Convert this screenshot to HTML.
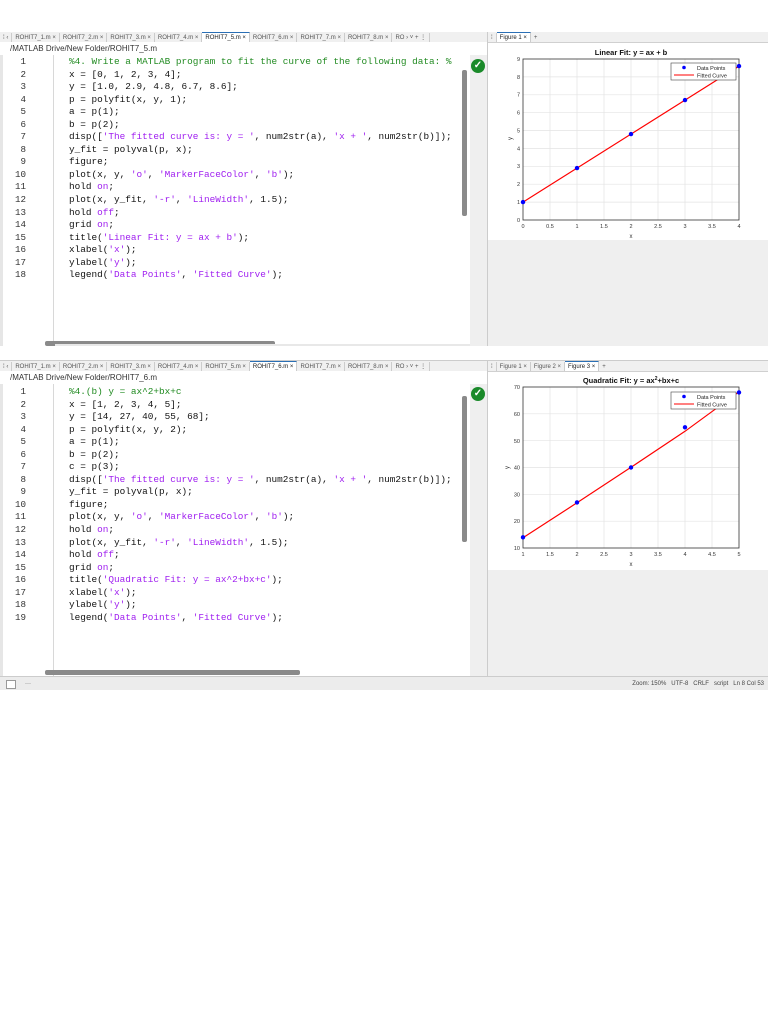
<!DOCTYPE html>
<html><head><meta charset="utf-8">
<style>
*{margin:0;padding:0;box-sizing:border-box}
body{width:768px;height:1024px;background:#fff;position:relative;overflow:hidden;font-family:"Liberation Sans",sans-serif}
.abs{position:absolute}
.tabs{height:11px;background:#f0f0f0;border-bottom:1px solid #d0d0d0;font-size:6px;color:#555;white-space:nowrap;overflow:hidden}
.tabs span{display:inline-block;height:10px;line-height:10px;padding:0 3px;border-right:1px solid #ccc}
.tabs span.on{background:#fff;border-top:1px solid #2a6fb5;color:#222}
.path{font-size:8px;color:#333;height:13px;line-height:13px;padding-left:10px;background:#fff;width:487px}
.code{font-family:"Liberation Mono",monospace;font-size:9.4px;line-height:12.55px;white-space:pre;color:#111}
.ln{font-family:"Liberation Mono",monospace;font-size:9.2px;line-height:12.55px;color:#333;text-align:right;width:26px;white-space:pre}
.g{color:#228b22}.m{color:#a020f0}
.gut{background:#fff;border-right:1px solid #d8d8d8}
.side{background:#efefef}
.chk{width:14px;height:14px;border-radius:50%;background:#1a8a2a;color:#fff;font-size:10px;line-height:14px;text-align:center;font-weight:bold}
.vs{background:#8a8a8a;width:5px;border-radius:2px}
.hs{background:#8a8a8a;height:5px;border-radius:2px}
</style></head><body>

<!-- Panel 1 -->
<div class="abs tabs" style="left:0;top:32px;width:487px"><span>⁞ ‹</span><span>ROHIT7_1.m ×</span><span>ROHIT7_2.m ×</span><span>ROHIT7_3.m ×</span><span>ROHIT7_4.m ×</span><span class="on">ROHIT7_5.m ×</span><span>ROHIT7_6.m ×</span><span>ROHIT7_7.m ×</span><span>ROHIT7_8.m ×</span><span>RO › ˅ + ⋮</span></div>
<div class="abs path" style="left:0;top:42px">/MATLAB Drive/New Folder/ROHIT7_5.m</div>
<div class="abs gut" style="left:0;top:55px;width:54px;height:291px;border-left:3px solid #e6e6e6"></div>
<div class="abs side" style="left:470px;top:55px;width:17px;height:291px"></div>
<div class="abs" style="left:487px;top:32px;width:1px;height:314px;background:#ccc"></div>
<div class="abs ln" style="left:0;top:56px">1
2
3
4
5
6
7
8
9
10
11
12
13
14
15
16
17
18</div>
<div class="abs code" style="left:69px;top:56px;width:390px;overflow:hidden"><span class="g">%4. Write a MATLAB program to fit the curve of the following data: % </span>
x = [0, 1, 2, 3, 4];
y = [1.0, 2.9, 4.8, 6.7, 8.6];
p = polyfit(x, y, 1);
a = p(1);
b = p(2);
disp([<span class="m">'The fitted curve is: y = '</span>, num2str(a), <span class="m">'x + '</span>, num2str(b)]);
y_fit = polyval(p, x);
figure;
plot(x, y, <span class="m">'o'</span>, <span class="m">'MarkerFaceColor'</span>, <span class="m">'b'</span>);
hold <span class="m">on</span>;
plot(x, y_fit, <span class="m">'-r'</span>, <span class="m">'LineWidth'</span>, 1.5);
hold <span class="m">off</span>;
grid <span class="m">on</span>;
title(<span class="m">'Linear Fit: y = ax + b'</span>);
xlabel(<span class="m">'x'</span>);
ylabel(<span class="m">'y'</span>);
legend(<span class="m">'Data Points'</span>, <span class="m">'Fitted Curve'</span>);</div>
<div class="abs vs" style="left:462px;top:70px;height:146px"></div>
<div class="abs chk" style="left:471px;top:59px">✓</div>
<div class="abs hs" style="left:45px;top:341px;width:230px"></div>
<div class="abs" style="left:55px;top:344px;width:415px;height:2px;background:#e8e8e8"></div>

<!-- Figure 1 panel -->
<div class="abs tabs" style="left:488px;top:32px;width:280px;background:#f0f0f0"><span>⁞</span><span class="on">Figure 1 ×</span><span style="border:none">+</span></div>
<div class="abs side" style="left:488px;top:240px;width:280px;height:106px"></div>

<!-- Panel 2 -->
<div class="abs" style="left:0;top:360px;width:768px;height:1px;background:#ccc"></div>
<div class="abs tabs" style="left:0;top:361px;width:487px"><span>⁞ ‹</span><span>ROHIT7_1.m ×</span><span>ROHIT7_2.m ×</span><span>ROHIT7_3.m ×</span><span>ROHIT7_4.m ×</span><span>ROHIT7_5.m ×</span><span class="on">ROHIT7_6.m ×</span><span>ROHIT7_7.m ×</span><span>ROHIT7_8.m ×</span><span>RO › ˅ + ⋮</span></div>
<div class="abs path" style="left:0;top:371px">/MATLAB Drive/New Folder/ROHIT7_6.m</div>
<div class="abs gut" style="left:0;top:384px;width:54px;height:292px;border-left:3px solid #e6e6e6"></div>
<div class="abs side" style="left:470px;top:384px;width:17px;height:292px"></div>
<div class="abs" style="left:487px;top:361px;width:1px;height:315px;background:#ccc"></div>
<div class="abs ln" style="left:0;top:386px">1
2
3
4
5
6
7
8
9
10
11
12
13
14
15
16
17
18
19</div>
<div class="abs code" style="left:69px;top:386px;width:390px;overflow:hidden"><span class="g">%4.(b) y = ax^2+bx+c</span>
x = [1, 2, 3, 4, 5];
y = [14, 27, 40, 55, 68];
p = polyfit(x, y, 2);
a = p(1);
b = p(2);
c = p(3);
disp([<span class="m">'The fitted curve is: y = '</span>, num2str(a), <span class="m">'x + '</span>, num2str(b)]);
y_fit = polyval(p, x);
figure;
plot(x, y, <span class="m">'o'</span>, <span class="m">'MarkerFaceColor'</span>, <span class="m">'b'</span>);
hold <span class="m">on</span>;
plot(x, y_fit, <span class="m">'-r'</span>, <span class="m">'LineWidth'</span>, 1.5);
hold <span class="m">off</span>;
grid <span class="m">on</span>;
title(<span class="m">'Quadratic Fit: y = ax^2+bx+c'</span>);
xlabel(<span class="m">'x'</span>);
ylabel(<span class="m">'y'</span>);
legend(<span class="m">'Data Points'</span>, <span class="m">'Fitted Curve'</span>);</div>
<div class="abs vs" style="left:462px;top:396px;height:146px"></div>
<div class="abs chk" style="left:471px;top:387px">✓</div>
<div class="abs hs" style="left:45px;top:670px;width:255px"></div>

<div class="abs tabs" style="left:488px;top:361px;width:280px"><span>⁞</span><span>Figure 1 ×</span><span>Figure 2 ×</span><span class="on">Figure 3 ×</span><span style="border:none">+</span></div>
<div class="abs side" style="left:488px;top:570px;width:280px;height:106px"></div>

<!-- status bar -->
<div class="abs" style="left:0;top:676px;width:768px;height:14px;background:#ececec;border-top:1px solid #ccc;font-size:6px;color:#444;line-height:14px">
<span style="position:absolute;left:6px;top:3px;width:10px;height:9px;border:1px solid #999;background:#fff"></span>
<span style="position:absolute;left:25px">···</span>
<span style="position:absolute;right:4px">Zoom: 150%&nbsp;&nbsp; UTF-8&nbsp;&nbsp; CRLF&nbsp;&nbsp; script&nbsp;&nbsp; Ln 8 Col 53</span></div>

<svg class="abs" style="left:0;top:0" width="768" height="700" font-family="Liberation Sans,sans-serif">
<!-- fig1 -->
<g stroke="#e3e3e3" stroke-width="0.7">
<line x1="550" y1="59" x2="550" y2="220"/><line x1="577" y1="59" x2="577" y2="220"/><line x1="604" y1="59" x2="604" y2="220"/><line x1="631" y1="59" x2="631" y2="220"/><line x1="658" y1="59" x2="658" y2="220"/><line x1="685" y1="59" x2="685" y2="220"/><line x1="712" y1="59" x2="712" y2="220"/>
<line x1="523" y1="202.1" x2="739" y2="202.1"/><line x1="523" y1="184.2" x2="739" y2="184.2"/><line x1="523" y1="166.3" x2="739" y2="166.3"/><line x1="523" y1="148.4" x2="739" y2="148.4"/><line x1="523" y1="130.6" x2="739" y2="130.6"/><line x1="523" y1="112.7" x2="739" y2="112.7"/><line x1="523" y1="94.8" x2="739" y2="94.8"/><line x1="523" y1="76.9" x2="739" y2="76.9"/>
</g>
<rect x="523" y="59" width="216" height="161" fill="none" stroke="#333" stroke-width="0.8"/>
<line x1="523" y1="202.1" x2="739" y2="66.1" stroke="#f00" stroke-width="1.2"/>
<g fill="#00f"><circle cx="523" cy="202.1" r="2.2"/><circle cx="577" cy="168.1" r="2.2"/><circle cx="631" cy="134.1" r="2.2"/><circle cx="685" cy="100.1" r="2.2"/><circle cx="739" cy="66.1" r="2.2"/></g>
<rect x="671" y="63" width="65" height="17" fill="#fff" stroke="#444" stroke-width="0.6"/>
<circle cx="684" cy="67.5" r="1.8" fill="#00f"/><line x1="674" y1="75" x2="694" y2="75" stroke="#f00" stroke-width="1"/>
<text x="697" y="70" font-size="5.5" fill="#222">Data Points</text><text x="697" y="77.5" font-size="5.5" fill="#222">Fitted Curve</text>
<text x="631" y="55" font-size="7.5" font-weight="bold" text-anchor="middle" fill="#111">Linear Fit: y = ax + b</text>
<g font-size="5.5" fill="#333" text-anchor="middle">
<text x="523" y="228">0</text><text x="550" y="228">0.5</text><text x="577" y="228">1</text><text x="604" y="228">1.5</text><text x="631" y="228">2</text><text x="658" y="228">2.5</text><text x="685" y="228">3</text><text x="712" y="228">3.5</text><text x="739" y="228">4</text>
</g>
<g font-size="5.5" fill="#333" text-anchor="end">
<text x="520" y="222">0</text><text x="520" y="204">1</text><text x="520" y="186">2</text><text x="520" y="168">3</text><text x="520" y="150.5">4</text><text x="520" y="132.5">5</text><text x="520" y="114.5">6</text><text x="520" y="96.5">7</text><text x="520" y="79">8</text><text x="520" y="61">9</text>
</g>
<text x="631" y="238" font-size="6" text-anchor="middle" fill="#333">x</text>
<text x="512" y="140" font-size="6" fill="#333" transform="rotate(-90 512 140)">y</text>

<!-- fig3 -->
<g stroke="#e3e3e3" stroke-width="0.7">
<line x1="550" y1="387" x2="550" y2="548"/><line x1="577" y1="387" x2="577" y2="548"/><line x1="604" y1="387" x2="604" y2="548"/><line x1="631" y1="387" x2="631" y2="548"/><line x1="658" y1="387" x2="658" y2="548"/><line x1="685" y1="387" x2="685" y2="548"/><line x1="712" y1="387" x2="712" y2="548"/>
<line x1="523" y1="521.2" x2="739" y2="521.2"/><line x1="523" y1="494.3" x2="739" y2="494.3"/><line x1="523" y1="467.5" x2="739" y2="467.5"/><line x1="523" y1="440.7" x2="739" y2="440.7"/><line x1="523" y1="413.8" x2="739" y2="413.8"/>
</g>
<rect x="523" y="387" width="216" height="161" fill="none" stroke="#333" stroke-width="0.8"/>
<polyline points="523,537.8 577,502.8 631,467.3 685,431.3 739,391.8" fill="none" stroke="#f00" stroke-width="1.2"/>
<g fill="#00f"><circle cx="523" cy="537.3" r="2.2"/><circle cx="577" cy="502.4" r="2.2"/><circle cx="631" cy="467.5" r="2.2"/><circle cx="685" cy="427.3" r="2.2"/><circle cx="739" cy="392.4" r="2.2"/></g>
<rect x="671" y="392" width="65" height="17" fill="#fff" stroke="#444" stroke-width="0.6"/>
<circle cx="684" cy="396.5" r="1.8" fill="#00f"/><line x1="674" y1="404" x2="694" y2="404" stroke="#f00" stroke-width="1"/>
<text x="697" y="399" font-size="5.5" fill="#222">Data Points</text><text x="697" y="406.5" font-size="5.5" fill="#222">Fitted Curve</text>
<text x="631" y="383" font-size="7.5" font-weight="bold" text-anchor="middle" fill="#111">Quadratic Fit: y = ax<tspan font-size="5" dy="-3">2</tspan><tspan dy="3">+bx+c</tspan></text>
<g font-size="5.5" fill="#333" text-anchor="middle">
<text x="523" y="556">1</text><text x="550" y="556">1.5</text><text x="577" y="556">2</text><text x="604" y="556">2.5</text><text x="631" y="556">3</text><text x="658" y="556">3.5</text><text x="685" y="556">4</text><text x="712" y="556">4.5</text><text x="739" y="556">5</text>
</g>
<g font-size="5.5" fill="#333" text-anchor="end">
<text x="520" y="550">10</text><text x="520" y="523">20</text><text x="520" y="496.5">30</text><text x="520" y="469.5">40</text><text x="520" y="443">50</text><text x="520" y="416">60</text><text x="520" y="389">70</text>
</g>
<text x="631" y="566" font-size="6" text-anchor="middle" fill="#333">x</text>
<text x="509" y="469" font-size="6" fill="#333" transform="rotate(-90 509 469)">y</text>
</svg>
</body></html>
